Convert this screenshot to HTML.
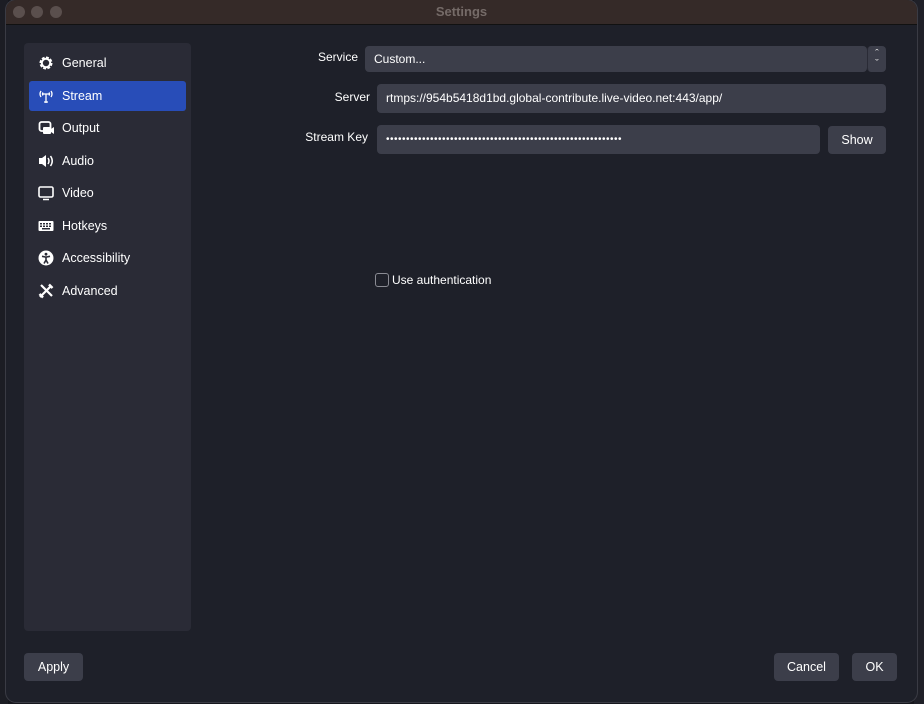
<!DOCTYPE html>
<html><head><meta charset="utf-8"><style>
*{margin:0;padding:0;box-sizing:border-box}
body{width:924px;height:704px;background:#16171d;font-family:"Liberation Sans",sans-serif;position:relative;overflow:hidden;color:#fff}
.bgl{position:absolute;left:0;top:0;width:8px;height:704px;background:#1c1d24}
.bgr{position:absolute;right:0;top:0;width:10px;height:704px;background:#1f2028}
.win{position:absolute;left:6px;top:0;width:911px;height:702px;background:#1e2029;border-radius:10px;overflow:hidden;box-shadow:0 0 0 1px #3a3b44}
.title{position:absolute;left:0;top:0;right:0;height:25px;background:#352a28;border-bottom:1px solid #111;text-align:center;font-size:13px;font-weight:bold;color:#756b68;line-height:24px}
.tl{position:absolute;top:6px;width:12px;height:12px;border-radius:50%;background:#5a4f4d}
.side{position:absolute;left:18px;top:43px;width:167px;height:588px;background:#2a2b36;border-radius:4px}
.item{position:absolute;left:5px;width:157px;height:30px;border-radius:3px;font-size:12.5px;line-height:30px;padding-left:33px;color:#fff}
.item svg{position:absolute;left:9px;top:7px}
.sel{background:#284db8}
.lbl{position:absolute;font-size:12px;color:#fff;text-align:right}
.field{position:absolute;background:#3c3e4a;border-radius:4px;font-size:12px;line-height:29px;padding-left:9px;color:#fff}
.btn{position:absolute;background:#3c3e4a;border-radius:4px;font-size:12.5px;color:#fff;text-align:center}
</style></head><body>
<div class="bgl"></div><div class="bgr"></div>
<div class="win">
<div class="title">Settings<div class="tl" style="left:7px"></div><div class="tl" style="left:25px"></div><div class="tl" style="left:44px"></div></div>
<div class="side">
<div class="item" style="top:5px"><svg width="16" height="16" viewBox="0 0 16 16"><circle cx="8" cy="8" r="5" fill="none" stroke="#fff" stroke-width="3" stroke-dasharray="2.6 1.3"/><circle cx="8" cy="8" r="4.2" fill="none" stroke="#fff" stroke-width="2"/></svg>General</div>
<div class="item sel" style="top:38px"><svg width="16" height="16" viewBox="0 0 16 16" fill="none" stroke="#fff" stroke-width="1.3"><path d="M3 3q-2 3 0 6M13 3q2 3 0 6M5 4.5q-1 1.5 0 3M11 4.5q1 1.5 0 3"/><path d="M5 6h6M8 6v9M6 14h4"/></svg>Stream</div>
<div class="item" style="top:70px"><svg width="16" height="16" viewBox="0 0 16 16"><rect x="1.5" y="2" width="11" height="9" rx="2" fill="none" stroke="#fff" stroke-width="1.8"/><rect x="5" y="7" width="8" height="7" rx="1" fill="#fff"/><path d="M13 9l3-2v7l-3-2z" fill="#fff"/></svg>Output</div>
<div class="item" style="top:103px"><svg width="16" height="16" viewBox="0 0 16 16"><path d="M1 5h3l4-3v12l-4-3H1z" fill="#fff"/><path d="M10 5q2 3 0 6M12.5 3q3.5 5 0 10" fill="none" stroke="#fff" stroke-width="1.5"/></svg>Audio</div>
<div class="item" style="top:135px"><svg width="16" height="16" viewBox="0 0 16 16"><rect x="1" y="2" width="14" height="10" rx="1.5" fill="none" stroke="#fff" stroke-width="1.6"/><path d="M5 14.5h6" stroke="#fff" stroke-width="1.5"/></svg>Video</div>
<div class="item" style="top:168px"><svg width="16" height="16" viewBox="0 0 16 16"><rect x="0.5" y="3" width="15" height="10" rx="1" fill="#fff"/><g fill="#2a2b36"><rect x="2" y="5" width="2" height="1.5"/><rect x="5" y="5" width="2" height="1.5"/><rect x="8" y="5" width="2" height="1.5"/><rect x="11" y="5" width="2" height="1.5"/><rect x="2" y="7.5" width="2" height="1.5"/><rect x="5" y="7.5" width="2" height="1.5"/><rect x="8" y="7.5" width="2" height="1.5"/><rect x="11" y="7.5" width="2" height="1.5"/><rect x="4" y="10" width="8" height="1.5"/></g></svg>Hotkeys</div>
<div class="item" style="top:200px"><svg width="16" height="16" viewBox="0 0 16 16"><circle cx="8" cy="8" r="7.5" fill="#fff"/><circle cx="8" cy="4.2" r="1.4" fill="#2a2b36"/><path d="M4 6.3l4 .8 4-.8M8 7v3l-2 3.5M8 10l2 3.5" stroke="#2a2b36" stroke-width="1.6" fill="none"/></svg>Accessibility</div>
<div class="item" style="top:233px"><svg width="16" height="16" viewBox="0 0 16 16" stroke="#fff" fill="none"><path d="M2 14L13 3" stroke-width="2.2"/><path d="M3 2l11 11" stroke-width="2.2"/><path d="M11 1.5l3.5 3.5" stroke-width="2.5"/><path d="M1.5 11l3.5 3.5" stroke-width="2.5"/></svg>Advanced</div>
</div>
<div class="lbl" style="left:280px;top:50px;width:72px">Service</div>
<div class="field" style="left:359px;top:46px;width:502px;height:26px;line-height:26px">Custom...</div>
<div class="field" style="left:861px;top:46px;width:19px;height:26px;padding:0;border-left:1px solid #2a2b36;text-align:center;font-size:11px;line-height:10px;padding-top:3px;color:#ddd">&#710;<br>&#711;</div>
<div class="lbl" style="left:280px;top:90px;width:84px">Server</div>
<div class="field" style="left:371px;top:84px;width:509px;height:29px">rtmps://954b5418d1bd.global-contribute.live-video.net:443/app/</div>
<div class="lbl" style="left:280px;top:130px;width:82px">Stream Key</div>
<div class="field" style="left:371px;top:125px;width:443px;height:29px;font-size:10px;letter-spacing:0.5px">•••••••••••••••••••••••••••••••••••••••••••••••••••••••••••</div>
<div class="btn" style="left:822px;top:126px;width:58px;height:28px;line-height:28px">Show</div>
<div style="position:absolute;left:369px;top:273px;width:14px;height:14px;border:1px solid #8a8b93;border-radius:3px"></div>
<div style="position:absolute;left:386px;top:273px;font-size:12px">Use authentication</div>
<div class="btn" style="left:18px;top:653px;width:59px;height:28px;line-height:28px">Apply</div>
<div class="btn" style="left:768px;top:653px;width:65px;height:28px;line-height:28px">Cancel</div>
<div class="btn" style="left:846px;top:653px;width:45px;height:28px;line-height:28px">OK</div>
</div>
</body></html>
